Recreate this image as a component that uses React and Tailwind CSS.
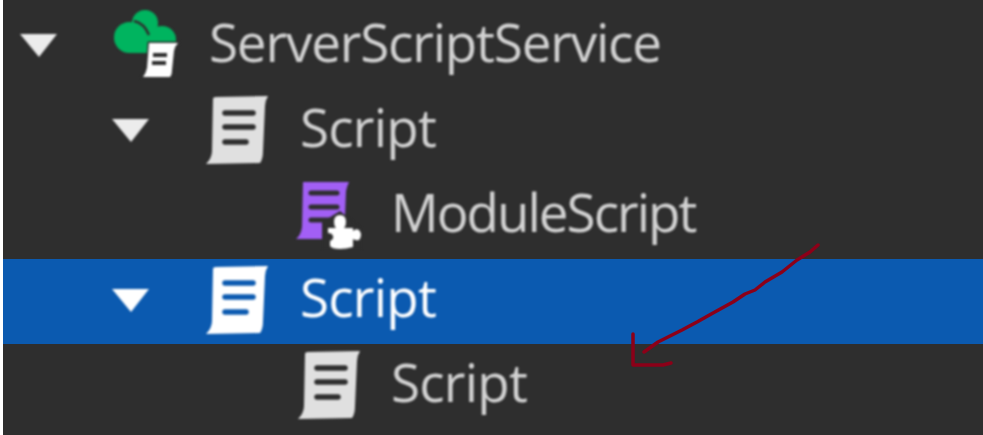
const BG = '#2e2e2e';
const BLUE = '#0b5ab0';

const Scroll = ({ fill = '#e0e0e0', line = BG }) => (
  <svg viewBox="0 0 62 68" className="w-[62px] h-[68px]">
    <path fill={fill} d="M7 3 Q7 1 10 1 L62 0 Q59 5 59 10 L57 55 Q57 63 54 67 L0 68 Q6 62 6 55 Z" />
    <path stroke={line} strokeWidth="5.5" strokeLinecap="round" d="M19 17 H47 M19 31 H47 M19 46 H40" />
  </svg>
);

const Caret = ({ fill = '#ececec' }) => (
  <svg viewBox="0 0 38 24" className="w-[38px] h-6 shrink-0">
    <path fill={fill} d="M0 1 H37 L19 24 Z" />
  </svg>
);

const Cloud = () => (
  <svg viewBox="0 0 66 70" className="w-[66px] h-[70px]">
    <circle cx="15.5" cy="27.5" r="15.5" fill="#00b45f" />
    <circle cx="31" cy="13" r="13" fill="#00b45f" />
    <circle cx="48" cy="30" r="14" fill="#00b45f" />
    <path fill="#00b45f" d="M15 20 H48 V43 H15 Z" />
    <path stroke={BG} strokeWidth="2.5" fill="none" d="M20 11 Q30 13 35 25" />
    <path fill="#fff" stroke={BG} strokeWidth="3" paintOrder="stroke" d="M35 33 H64 Q61 36 60 41 L58 60 Q58 65 56 67 H29 Q32 63 33 58 Z" />
    <path stroke={BG} strokeWidth="4" d="M39 45 H53 M38 53 H52" />
  </svg>
);

const Module = () => (
  <svg viewBox="0 0 68 68" className="w-[68px] h-[68px]">
    <path fill="#a25ff5" d="M7 1 H53 Q51 5 50 10 L49 36 L27 42 V58 H0 Q5 54 6 46 Z" />
    <path stroke={BG} strokeWidth="5" strokeLinecap="round" d="M15 12 H41 M15 26 H41 M15 39 H36" />
    <path fill={BG} d="M26 41 L44 30 L66 48 V68 H26 Z" />
    <path fill="#fff" d="M38 41 Q38 34 44 34 Q50 34 50 41 Q50 45 48 47 H57 V50 Q60 47 63 49 Q67 54 63 59 Q60 60 57 58 V66 Q50 68 44 68 Q36 68 34 65 V60 Q38 58 37 55 Q36 52 32 52 V47 H40 Q38 45 38 41 Z" />
  </svg>
);

const Row = ({ indent, caret, icon, label, active, gap, tracking }) => (
  <div className={`h-[85px] pb-[4px] flex items-center ${active ? 'bg-[#0b5ab0] text-white' : 'text-[#d2d2d2]'}`}>
    <div className={`flex items-center blur-[0.8px] ${indent}`}>
      {caret && <Caret fill={active ? '#ffffff' : '#ececec'} />}
      <div className={`flex items-center ${gap}`}>{icon}</div>
      <span className={`text-[53px] leading-none font-normal mb-[6px] ${tracking}`}>{label}</span>
    </div>
  </div>
);

export default function App() {
  return (
    <div className="relative w-[983px] h-[435px] overflow-hidden bg-white pl-[3px] font-['Open_Sans','Noto_Sans',sans-serif]">
      <div className="h-full bg-[#2e2e2e] pt-[4px]">
        <Row indent="pl-[17px]" caret label="ServerScriptService" tracking="tracking-[-1.2px]" gap="ml-[56px] mr-[29px]" icon={<Cloud />} />
        <Row indent="pl-[109px]" caret label="Script" tracking="tracking-[-0.8px]" gap="ml-[56px] mr-[32px]" icon={<Scroll />} />
        <Row indent="pl-[293px]" label="ModuleScript" tracking="tracking-[-2px]" gap="mr-[27px]" icon={<Module />} />
        <Row indent="pl-[109px]" caret active label="Script" tracking="tracking-[-0.8px]" gap="ml-[56px] mr-[32px]" icon={<Scroll fill="#ffffff" line={BLUE} />} />
        <Row indent="pl-[295px]" label="Script" tracking="tracking-[-0.8px]" gap="mr-[31px]" icon={<Scroll />} />
      </div>
      {/* red marker arrow drawn over the tree */}
      <svg viewBox="0 0 983 435" className="absolute inset-0 w-[983px] h-[435px] pointer-events-none">
        <path fill="none" stroke="#8c0018" strokeWidth="3.5" strokeLinecap="round" strokeLinejoin="round"
          d="M818 245 L810 252 L797 260 L782 272 L765 282 L755 290 L745 294 L733 302 L713 313 L697 322 L682 330 L658 342 L644 352" />
        <path fill="none" stroke="#8c0018" strokeWidth="3.5" strokeLinecap="round" strokeLinejoin="round"
          d="M633 334 V365 H663 L671 363" />
      </svg>
    </div>
  );
}
